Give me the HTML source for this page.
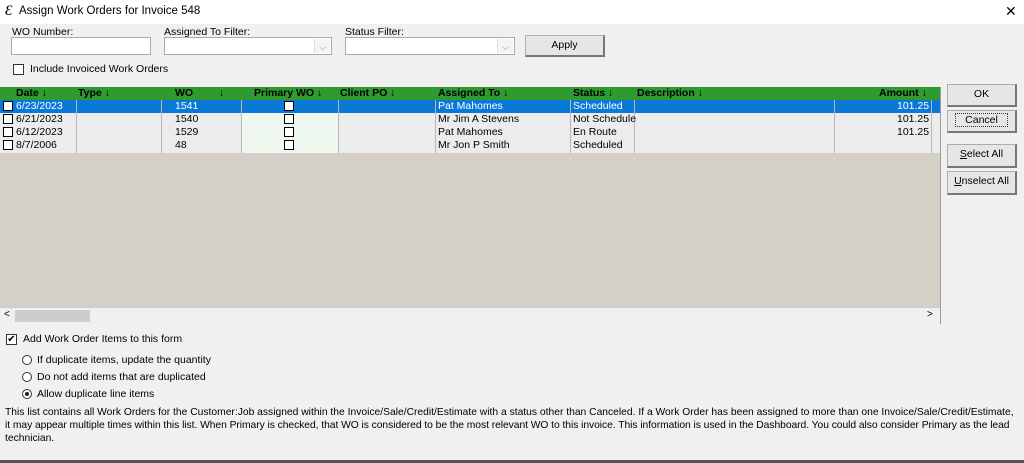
<!DOCTYPE html>
<html><head><style>
*{box-sizing:border-box;margin:0;padding:0}
body{width:1024px;height:463px;background:#f0f0f0;font-family:"Liberation Sans",sans-serif;font-size:10.5px;color:#000;position:relative;overflow:hidden}
.a{position:absolute;white-space:nowrap}
.inp{position:absolute;background:#fff;border:1px solid #aaa}
.dd{position:absolute;right:1px;top:1px;width:16px;bottom:1px;background:#f4f4f4;border-left:1px solid #ddd;color:#888;font-size:9px;text-align:center;line-height:16px}
.btn{position:absolute;background:#e6e6e6;border:1px solid #adadad;border-right:2px solid #777;border-bottom:2px solid #777;text-align:center;line-height:19px;font-size:10.5px}
.cb{position:absolute;width:10px;height:10px;border:1.5px solid #000;background:#fff}
.hd{position:absolute;top:0;font-weight:bold;color:#000;line-height:13px}
.row{position:absolute;left:0;width:940px;height:13px;line-height:13px}
.vl{position:absolute;top:0;width:1px;height:66px;background:#b8b8b8}
.rad{position:absolute;width:10px;height:10px;border:1.3px solid #333;border-radius:50%;background:#fff}
.p{position:absolute;left:5px;white-space:nowrap;font-size:10.3px;line-height:13px}
</style></head><body>
<div class="a" style="left:0;top:0;width:1024px;height:24px;background:#fff"></div>
<div class="a" style="left:5px;top:3px;font-size:15px;font-style:italic;font-family:'Liberation Serif',serif">&#400;</div>
<div class="a" style="left:19px;top:5px;font-size:11.5px">Assign Work Orders for Invoice 548</div>
<div class="a" style="left:1005px;top:3px;font-size:14px">✕</div>

<div class="a" style="left:12px;top:26px">WO Number:</div>
<div class="inp" style="left:11px;top:37px;width:140px;height:18px"></div>
<div class="a" style="left:164px;top:26px">Assigned To Filter:</div>
<div class="inp" style="left:164px;top:37px;width:168px;height:18px"><div class="dd">⌵</div></div>
<div class="a" style="left:345px;top:26px">Status Filter:</div>
<div class="inp" style="left:345px;top:37px;width:170px;height:18px"><div class="dd">⌵</div></div>
<div class="btn" style="left:525px;top:35px;width:80px;height:22px">Apply</div>
<div class="cb" style="left:13px;top:64px;width:11px;height:11px;border:1px solid #333"></div>
<div class="a" style="left:30px;top:63px">Include Invoiced Work Orders</div>

<div class="a" style="left:0;top:87px;width:941px;height:237px;background:#d4d0c8;border-right:1px solid #999">
 <div class="a" style="left:0;top:0;width:940px;height:13px;background:#2f9a2f">
  <div class="hd" style="left:16px">Date ↓</div>
  <div class="hd" style="left:78px">Type ↓</div>
  <div class="hd" style="left:175px">WO</div><div class="hd" style="left:219px">↓</div>
  <div class="hd" style="left:254px">Primary WO ↓</div>
  <div class="hd" style="left:340px">Client PO ↓</div>
  <div class="hd" style="left:438px">Assigned To ↓</div>
  <div class="hd" style="left:573px">Status ↓</div>
  <div class="hd" style="left:637px">Description ↓</div>
  <div class="hd" style="left:879px">Amount ↓</div>
 </div>
 <div class="a" style="left:0;top:13px;width:940px;height:53px;background:#ececec"></div>
 <div class="a" style="left:241px;top:26px;width:97px;height:40px;background:#eef8ee"></div>
 <div class="row" style="top:13px;background:#0a78d7;color:#fff"></div>
 <div class="vl" style="left:76px;top:13px;height:53px"></div><div class="vl" style="left:161px;top:13px;height:53px"></div>
 <div class="vl" style="left:241px;top:13px;height:53px"></div><div class="vl" style="left:338px;top:13px;height:53px"></div>
 <div class="vl" style="left:435px;top:13px;height:53px"></div><div class="vl" style="left:570px;top:13px;height:53px"></div>
 <div class="vl" style="left:634px;top:13px;height:53px"></div><div class="vl" style="left:834px;top:13px;height:53px"></div>
 <div class="vl" style="left:931px;top:13px;height:53px"></div>
 <div class="row" style="top:13px;color:#fff"><span class="a" style="left:16px">6/23/2023</span><span class="a" style="left:175px">1541</span><span class="a" style="left:438px">Pat Mahomes</span><span class="a" style="left:573px">Scheduled</span><span class="a" style="left:897px">101.25</span></div>
 <div class="row" style="top:26px"><span class="a" style="left:16px">6/21/2023</span><span class="a" style="left:175px">1540</span><span class="a" style="left:438px">Mr Jim A Stevens</span><span class="a" style="left:573px">Not Schedule</span><span class="a" style="left:897px">101.25</span></div>
 <div class="row" style="top:39px"><span class="a" style="left:16px">6/12/2023</span><span class="a" style="left:175px">1529</span><span class="a" style="left:438px">Pat Mahomes</span><span class="a" style="left:573px">En Route</span><span class="a" style="left:897px">101.25</span></div>
 <div class="row" style="top:52px"><span class="a" style="left:16px">8/7/2006</span><span class="a" style="left:175px">48</span><span class="a" style="left:438px">Mr Jon P Smith</span><span class="a" style="left:573px">Scheduled</span></div>
 <div class="cb" style="left:3px;top:14px"></div><div class="cb" style="left:3px;top:27px"></div><div class="cb" style="left:3px;top:40px"></div><div class="cb" style="left:3px;top:53px"></div>
 <div class="cb" style="left:284px;top:14px"></div><div class="cb" style="left:284px;top:27px"></div><div class="cb" style="left:284px;top:40px"></div><div class="cb" style="left:284px;top:53px"></div>
 <div class="a" style="left:0;top:220px;width:940px;height:17px;background:#f0f0f0;border-top:1px solid #ccc">
  <div class="a" style="left:4px;top:1px;font-size:10px">&lt;</div>
  <div class="a" style="left:15px;top:2px;width:75px;height:12px;background:#cdcdcd"></div>
  <div class="a" style="left:927px;top:1px;font-size:10px">&gt;</div>
 </div>
</div>

<div class="btn" style="left:947px;top:84px;width:70px;height:23px">OK</div>
<div class="btn" style="left:947px;top:110px;width:70px;height:23px"><span style="border:1px dotted #333;padding:0 9px">Cancel</span></div>
<div class="btn" style="left:947px;top:144px;width:70px;height:24px"><u>S</u>elect All</div>
<div class="btn" style="left:947px;top:171px;width:70px;height:24px"><u>U</u>nselect All</div>

<div class="cb" style="left:6px;top:334px;width:11px;height:11px;border:1px solid #333;font-size:10px;line-height:9px;text-align:center">✔</div>
<div class="a" style="left:23px;top:333px">Add Work Order Items to this form</div>
<div class="rad" style="left:22px;top:355px"></div><div class="a" style="left:37px;top:354px">If duplicate items, update the quantity</div>
<div class="rad" style="left:22px;top:372px"></div><div class="a" style="left:37px;top:371px">Do not add items that are duplicated</div>
<div class="rad" style="left:22px;top:389px"><div style="position:absolute;left:2px;top:2px;width:4px;height:4px;border-radius:50%;background:#222"></div></div><div class="a" style="left:37px;top:388px">Allow duplicate line items</div>
<div class="p" style="top:406px">This list contains all Work Orders for the Customer:Job assigned within the Invoice/Sale/Credit/Estimate with a status other than Canceled. If a Work Order has been assigned to more than one Invoice/Sale/Credit/Estimate,</div>
<div class="p" style="top:419px;letter-spacing:-0.05px">it may appear multiple times within this list. When Primary is checked, that WO is considered to be the most relevant WO to this invoice. This information is used in the Dashboard. You could also consider Primary as the lead</div>
<div class="p" style="top:432px">technician.</div>
<div class="a" style="left:0;top:460px;width:1024px;height:3px;background:#555"></div>
</body></html>
